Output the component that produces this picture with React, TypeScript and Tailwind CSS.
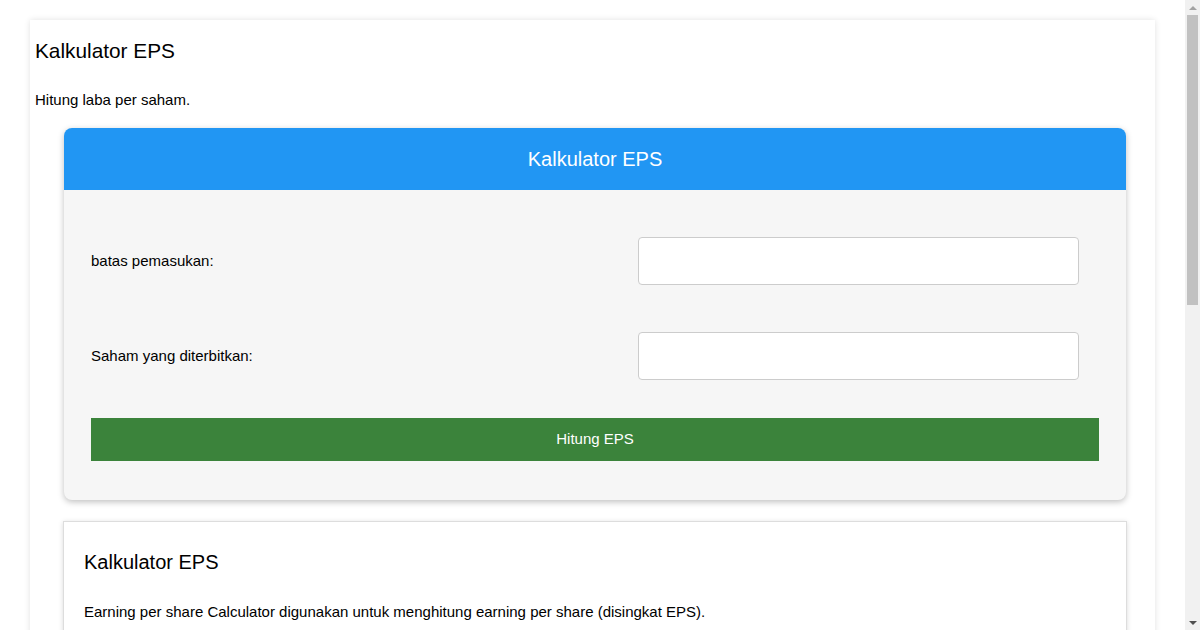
function Scrollbar() {
  return (
    <div className="flex h-[630px] w-[15px] shrink-0 flex-col bg-[#f1f1f1]">
      <div className="flex h-[15px] items-center justify-center">
        <div className="h-0 w-0 border-x-[4px] border-b-[4px] border-x-transparent border-b-[#a3a3a3]" />
      </div>
      <div className="mx-[2px] h-[290px] bg-[#c1c1c1]" />
      <div className="flex-1" />
      <div className="flex h-[15px] items-center justify-center">
        <div className="h-0 w-0 border-x-[4px] border-t-[4px] border-x-transparent border-t-[#505050]" />
      </div>
    </div>
  )
}

export default function App() {
  return (
    <div className="flex h-[630px] overflow-hidden bg-white font-['Liberation_Sans',Arial,sans-serif] text-black">
      <div className="flex-1 overflow-hidden pt-[20px]">
        <div className="mx-auto w-[1125px] bg-white px-[5px] pb-10 shadow-[0_0_6px_rgba(0,0,0,0.12)]">
          {/* Page title */}
          <h1 className="pt-[19px] text-[20.8px] leading-[24px]">Kalkulator EPS</h1>
          <p className="mt-[28px] text-[15px] leading-[17px]">Hitung laba per saham.</p>

          {/* Calculator card */}
          <div className="ml-[29px] mt-[20px] w-[1062px] overflow-hidden rounded-lg bg-[#f6f6f6] shadow-[0_2px_6px_rgba(0,0,0,0.25)]">
            <div className="flex h-[62px] items-center justify-center bg-[#2196f3] text-[20px] text-white">
              Kalkulator EPS
            </div>
            <div className="px-[27px] pb-[39px] pt-[47px]">
              <div className="flex h-[48px] items-center">
                <label className="w-[547px] text-[15px]">batas pemasukan:</label>
                <input
                  type="text"
                  className="h-[48px] w-[441px] rounded-[4px] border border-[#ccc] bg-white px-3 outline-none"
                />
              </div>
              <div className="mt-[47px] flex h-[48px] items-center">
                <label className="w-[547px] text-[15px]">Saham yang diterbitkan:</label>
                <input
                  type="text"
                  className="h-[48px] w-[441px] rounded-[4px] border border-[#ccc] bg-white px-3 outline-none"
                />
              </div>
              <button className="mt-[38px] flex h-[43px] w-full items-center justify-center bg-[#3b833b] text-[15px] text-white">
                Hitung EPS
              </button>
            </div>
          </div>

          {/* Info card */}
          <div className="ml-[28px] mt-[21px] w-[1064px] border border-[#ddd] bg-white px-[20px] pb-8 pt-[29px] shadow-[0_1px_5px_rgba(0,0,0,0.15)]">
            <h2 className="text-[20px] leading-[23px]">Kalkulator EPS</h2>
            <p className="mt-[26px] text-[15px] leading-[24px]">
              Earning per share Calculator digunakan untuk menghitung earning per share (disingkat EPS).
            </p>
          </div>
        </div>
      </div>
      <Scrollbar />
    </div>
  )
}
